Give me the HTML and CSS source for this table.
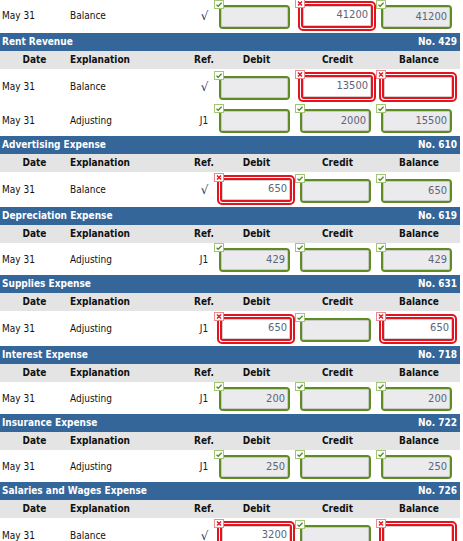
FILE: index.html
```html
<!DOCTYPE html>
<html>
<head>
<meta charset="utf-8">
<link rel="stylesheet" href="styles.css">
</head>
<body>
<div class="ledger">
<table class="grid">
<colgroup><col class="c-date"><col class="c-exp"><col class="c-ref"><col class="c-num"><col class="c-num"><col class="c-bal"></colgroup>
<tbody>
<tr class="row">
<td class="date">May 31</td><td class="exp">Balance</td><td class="ref chk">√</td>
<td class="f"><div class="fld ok"><span class="mark"><svg viewBox="0 0 8 7"><path d="M1.5 3.8 L3.2 5.3 L6.6 1.8"/></svg></span><div class="in"></div></div></td>
<td class="f"><div class="fld bad"><span class="mark"><svg viewBox="0 0 8 7"><path d="M2 1.5 L6 5.5 M6 1.5 L2 5.5"/></svg></span><div class="in">41200</div></div></td>
<td class="f"><div class="fld ok"><span class="mark"><svg viewBox="0 0 8 7"><path d="M1.5 3.8 L3.2 5.3 L6.6 1.8"/></svg></span><div class="in">41200</div></div></td>
</tr>

<tr class="title"><td colspan="6"><div class="tbar"><span>Rent Revenue</span><span>No. 429</span></div></td></tr>
<tr class="head"><th class="ctr">Date</th><th class="lft">Explanation</th><th class="ctr">Ref.</th><th class="ctr">Debit</th><th class="ctr">Credit</th><th class="ctr">Balance</th></tr>
<tr class="row">
<td class="date">May 31</td><td class="exp">Balance</td><td class="ref chk">√</td>
<td class="f"><div class="fld ok"><span class="mark"><svg viewBox="0 0 8 7"><path d="M1.5 3.8 L3.2 5.3 L6.6 1.8"/></svg></span><div class="in"></div></div></td>
<td class="f"><div class="fld bad"><span class="mark"><svg viewBox="0 0 8 7"><path d="M2 1.5 L6 5.5 M6 1.5 L2 5.5"/></svg></span><div class="in">13500</div></div></td>
<td class="f"><div class="fld bad"><span class="mark"><svg viewBox="0 0 8 7"><path d="M2 1.5 L6 5.5 M6 1.5 L2 5.5"/></svg></span><div class="in"></div></div></td>
</tr>
<tr class="row">
<td class="date">May 31</td><td class="exp">Adjusting</td><td class="ref">J1</td>
<td class="f"><div class="fld ok"><span class="mark"><svg viewBox="0 0 8 7"><path d="M1.5 3.8 L3.2 5.3 L6.6 1.8"/></svg></span><div class="in"></div></div></td>
<td class="f"><div class="fld ok"><span class="mark"><svg viewBox="0 0 8 7"><path d="M1.5 3.8 L3.2 5.3 L6.6 1.8"/></svg></span><div class="in">2000</div></div></td>
<td class="f"><div class="fld ok"><span class="mark"><svg viewBox="0 0 8 7"><path d="M1.5 3.8 L3.2 5.3 L6.6 1.8"/></svg></span><div class="in">15500</div></div></td>
</tr>

<tr class="title"><td colspan="6"><div class="tbar"><span>Advertising Expense</span><span>No. 610</span></div></td></tr>
<tr class="head"><th class="ctr">Date</th><th class="lft">Explanation</th><th class="ctr">Ref.</th><th class="ctr">Debit</th><th class="ctr">Credit</th><th class="ctr">Balance</th></tr>
<tr class="row">
<td class="date">May 31</td><td class="exp">Balance</td><td class="ref chk">√</td>
<td class="f"><div class="fld bad"><span class="mark"><svg viewBox="0 0 8 7"><path d="M2 1.5 L6 5.5 M6 1.5 L2 5.5"/></svg></span><div class="in">650</div></div></td>
<td class="f"><div class="fld ok"><span class="mark"><svg viewBox="0 0 8 7"><path d="M1.5 3.8 L3.2 5.3 L6.6 1.8"/></svg></span><div class="in"></div></div></td>
<td class="f"><div class="fld ok"><span class="mark"><svg viewBox="0 0 8 7"><path d="M1.5 3.8 L3.2 5.3 L6.6 1.8"/></svg></span><div class="in">650</div></div></td>
</tr>

<tr class="title"><td colspan="6"><div class="tbar"><span>Depreciation Expense</span><span>No. 619</span></div></td></tr>
<tr class="head"><th class="ctr">Date</th><th class="lft">Explanation</th><th class="ctr">Ref.</th><th class="ctr">Debit</th><th class="ctr">Credit</th><th class="ctr">Balance</th></tr>
<tr class="row">
<td class="date">May 31</td><td class="exp">Adjusting</td><td class="ref">J1</td>
<td class="f"><div class="fld ok"><span class="mark"><svg viewBox="0 0 8 7"><path d="M1.5 3.8 L3.2 5.3 L6.6 1.8"/></svg></span><div class="in">429</div></div></td>
<td class="f"><div class="fld ok"><span class="mark"><svg viewBox="0 0 8 7"><path d="M1.5 3.8 L3.2 5.3 L6.6 1.8"/></svg></span><div class="in"></div></div></td>
<td class="f"><div class="fld ok"><span class="mark"><svg viewBox="0 0 8 7"><path d="M1.5 3.8 L3.2 5.3 L6.6 1.8"/></svg></span><div class="in">429</div></div></td>
</tr>

<tr class="title"><td colspan="6"><div class="tbar"><span>Supplies Expense</span><span>No. 631</span></div></td></tr>
<tr class="head"><th class="ctr">Date</th><th class="lft">Explanation</th><th class="ctr">Ref.</th><th class="ctr">Debit</th><th class="ctr">Credit</th><th class="ctr">Balance</th></tr>
<tr class="row">
<td class="date">May 31</td><td class="exp">Adjusting</td><td class="ref">J1</td>
<td class="f"><div class="fld bad"><span class="mark"><svg viewBox="0 0 8 7"><path d="M2 1.5 L6 5.5 M6 1.5 L2 5.5"/></svg></span><div class="in">650</div></div></td>
<td class="f"><div class="fld ok"><span class="mark"><svg viewBox="0 0 8 7"><path d="M1.5 3.8 L3.2 5.3 L6.6 1.8"/></svg></span><div class="in"></div></div></td>
<td class="f"><div class="fld bad"><span class="mark"><svg viewBox="0 0 8 7"><path d="M2 1.5 L6 5.5 M6 1.5 L2 5.5"/></svg></span><div class="in">650</div></div></td>
</tr>

<tr class="title"><td colspan="6"><div class="tbar"><span>Interest Expense</span><span>No. 718</span></div></td></tr>
<tr class="head"><th class="ctr">Date</th><th class="lft">Explanation</th><th class="ctr">Ref.</th><th class="ctr">Debit</th><th class="ctr">Credit</th><th class="ctr">Balance</th></tr>
<tr class="row">
<td class="date">May 31</td><td class="exp">Adjusting</td><td class="ref">J1</td>
<td class="f"><div class="fld ok"><span class="mark"><svg viewBox="0 0 8 7"><path d="M1.5 3.8 L3.2 5.3 L6.6 1.8"/></svg></span><div class="in">200</div></div></td>
<td class="f"><div class="fld ok"><span class="mark"><svg viewBox="0 0 8 7"><path d="M1.5 3.8 L3.2 5.3 L6.6 1.8"/></svg></span><div class="in"></div></div></td>
<td class="f"><div class="fld ok"><span class="mark"><svg viewBox="0 0 8 7"><path d="M1.5 3.8 L3.2 5.3 L6.6 1.8"/></svg></span><div class="in">200</div></div></td>
</tr>

<tr class="title"><td colspan="6"><div class="tbar"><span>Insurance Expense</span><span>No. 722</span></div></td></tr>
<tr class="head"><th class="ctr">Date</th><th class="lft">Explanation</th><th class="ctr">Ref.</th><th class="ctr">Debit</th><th class="ctr">Credit</th><th class="ctr">Balance</th></tr>
<tr class="row">
<td class="date">May 31</td><td class="exp">Adjusting</td><td class="ref">J1</td>
<td class="f"><div class="fld ok"><span class="mark"><svg viewBox="0 0 8 7"><path d="M1.5 3.8 L3.2 5.3 L6.6 1.8"/></svg></span><div class="in">250</div></div></td>
<td class="f"><div class="fld ok"><span class="mark"><svg viewBox="0 0 8 7"><path d="M1.5 3.8 L3.2 5.3 L6.6 1.8"/></svg></span><div class="in"></div></div></td>
<td class="f"><div class="fld ok"><span class="mark"><svg viewBox="0 0 8 7"><path d="M1.5 3.8 L3.2 5.3 L6.6 1.8"/></svg></span><div class="in">250</div></div></td>
</tr>

<tr class="title"><td colspan="6"><div class="tbar"><span>Salaries and Wages Expense</span><span>No. 726</span></div></td></tr>
<tr class="head"><th class="ctr">Date</th><th class="lft">Explanation</th><th class="ctr">Ref.</th><th class="ctr">Debit</th><th class="ctr">Credit</th><th class="ctr">Balance</th></tr>
<tr class="row">
<td class="date">May 31</td><td class="exp">Balance</td><td class="ref chk">√</td>
<td class="f"><div class="fld bad"><span class="mark"><svg viewBox="0 0 8 7"><path d="M2 1.5 L6 5.5 M6 1.5 L2 5.5"/></svg></span><div class="in">3200</div></div></td>
<td class="f"><div class="fld ok"><span class="mark"><svg viewBox="0 0 8 7"><path d="M1.5 3.8 L3.2 5.3 L6.6 1.8"/></svg></span><div class="in"></div></div></td>
<td class="f"><div class="fld bad"><span class="mark"><svg viewBox="0 0 8 7"><path d="M2 1.5 L6 5.5 M6 1.5 L2 5.5"/></svg></span><div class="in"></div></div></td>
</tr>
</tbody>
</table>
</div>
</body>
</html>
```

FILE: styles.css
```css
html, body {
  margin: 0;
  padding: 0;
  background: #fff;
}
body {
  font-family: "DejaVu Sans Condensed", "DejaVu Sans", sans-serif;
  font-size: 10px;
  color: #111;
  overflow: hidden;
}
.ledger {
  width: 460px;
  margin-top: -2px;
}
.grid {
  width: 460px;
  table-layout: fixed;
  border-collapse: collapse;
  border-spacing: 0;
}
.c-date { width: 69px; }
.c-exp { width: 123px; }
.c-ref { width: 24px; }
.c-num { width: 81px; }
.c-bal { width: 82px; }

.grid td, .grid th {
  padding: 0;
}
.title td {
  background: #346699;
  height: 18px;
  padding: 0 3px 0 2px;
}
.tbar {
  display: flex;
  justify-content: space-between;
  align-items: center;
  color: #fff;
  font-weight: bold;
  font-size: 10px;
  line-height: 18px;
  white-space: nowrap;
}
.head th {
  background: #e4e4e4;
  height: 18px;
  font-weight: bold;
  color: #111;
  font-size: 10px;
  line-height: 18px;
  white-space: nowrap;
}
.head .ctr { text-align: center; }
.head .lft { text-align: left; padding-left: 1px; }

.row td {
  vertical-align: middle;
}
.date {
  padding-left: 2px !important;
  white-space: nowrap;
}
.exp {
  padding-left: 1px !important;
}
.ref {
  text-align: center;
  color: #0d1b3a;
}
.ref.chk {
  font-family: "DejaVu Sans", sans-serif;
  font-size: 12px;
  color: #1b2d5e;
  padding-left: 1px !important;
}
.f {
  padding: 3px 0 2px !important;
}
.fld {
  position: relative;
  box-sizing: border-box;
  display: block;
}
.fld.ok {
  width: 71px;
  height: 24px;
  margin: 2px 0 1px 3px;
  border: 2px solid #5e8c22;
  border-radius: 4px;
}
.fld.bad {
  width: 78px;
  height: 30px;
  margin-left: 1px;
  border: 2px solid #e4141e;
  border-radius: 5px;
  padding: 1px;
  background: #fff;
}
.in {
  box-sizing: border-box;
  height: 100%;
  border: 1px solid #c9c9c9;
  border-radius: 2px;
  background: #ebebed;
  text-align: right;
  padding-right: 2px;
  font-size: 11px;
  line-height: 18px;
  color: #5b6577;
  font-family: "DejaVu Sans Condensed", "DejaVu Sans", sans-serif;
}
.fld.bad .in {
  border: 2px solid #e4141e;
  border-radius: 3px;
  background: #fff;
  box-shadow: inset 0 0 0 1px #d0d0d0;
  line-height: 18px;
  padding-right: 3px;
}
.mark {
  position: absolute;
  z-index: 2;
  box-sizing: border-box;
  width: 10px;
  height: 9px;
  background: #fff;
  border: 1px solid #a2c576;
  display: flex;
  align-items: center;
  justify-content: center;
}
.fld.ok .mark {
  left: -7px;
  top: -7px;
}
.fld.bad .mark {
  left: -5px;
  top: -4px;
  border-color: #ef8a8a;
}
.mark svg {
  width: 8px;
  height: 7px;
  display: block;
  fill: none;
  stroke-width: 1.3;
}
.fld.ok .mark svg { stroke: #4f8f1f; }
.fld.bad .mark svg { stroke: #e4141e; stroke-width: 1.4; }
```
